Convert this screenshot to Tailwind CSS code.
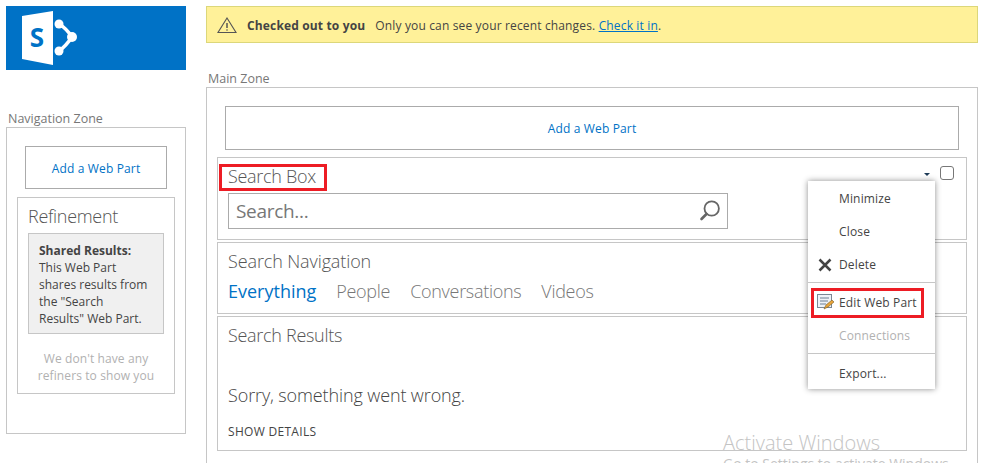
<!DOCTYPE html>
<html lang="en">
<head>
  <meta charset="UTF-8" />
  <title>Search page</title>
  <script src="https://cdn.jsdelivr.net/npm/@tailwindcss/browser@4"></script>
</head>
<body class="bg-white h-[463px] w-[986px] overflow-hidden relative font-['Open_Sans',sans-serif] text-[#444]">
  <div class="flex gap-[20px] pl-[6px] pt-[6px] h-[463px] overflow-hidden">
    <!-- left column -->
    <div class="w-[180px] shrink-0">
      <div class="h-[64px] bg-[#0072c6] relative">
        <svg class="absolute left-[16px] top-[5px]" width="60" height="56" viewBox="0 0 60 56">
          <path d="M0 5 L 31 0 V 54 L 0 48 Z" fill="#fff"/>
          <text x="15" y="36" text-anchor="middle" font-family="Open Sans" font-weight="700" font-size="26" fill="#0072c6">S</text>
          <path d="M37 13 Q 44 17 50 26 Q 44 35 37 40" fill="none" stroke="#fff" stroke-width="3.500"/>
          <circle cx="37" cy="13" r="4.500" fill="#fff"/>
          <circle cx="37" cy="40" r="4.500" fill="#fff"/>
          <circle cx="50" cy="26" r="5" fill="#fff"/>
        </svg>
      </div>
      <div class="mt-[40px] pl-[2px] text-[12.500px] leading-[17px] text-[#777]">Navigation Zone</div>
      <div class="h-[307px] border border-[#c6c6c6] px-[10px] pt-[18px]">
        <div class="mx-[8px] h-[43px] pt-[2px] border border-[#ababab] flex items-center justify-center text-[12px] text-[#0072c6] tracking-[0.15px]">Add a Web Part</div>
        <div class="mt-[8px] h-[197px] border border-[#c6c6c6] px-[10px] pt-[6px]">
          <div class="text-[18px] leading-[24px] font-light text-[#555] tracking-[-0.3px]">Refinement</div>
          <div class="mt-[5px] h-[101px] bg-[#f0f0f0] border border-[#c6c6c6] pl-[10px] pt-[8px] text-[12px] leading-[17px] text-[#444]">
            <div class="font-bold">Shared Results:</div>
            <div>This Web Part<br>shares results from<br>the "Search<br>Results" Web Part.</div>
          </div>
          <div class="mt-[16px] text-center text-[12px] leading-[17px] text-[#b1b1b1] tracking-[0.1px]">We don't have any<br>refiners to show you</div>
        </div>
      </div>
    </div>

    <!-- main column -->
    <div class="w-[772px] shrink-0">
      <div class="h-[37px] bg-[#fff199] border border-[#dcd77a] flex items-center pl-[10px] text-[12px] text-[#444] tracking-[0.15px]">
        <svg width="20" height="18" viewBox="0 0 20 18" fill="none" stroke="#555" stroke-width="1.100">
          <path d="M10 2 L 19 16.500 H 1 Z"/>
          <path d="M10 7 V 12" stroke-width="1.500"/>
          <circle cx="10" cy="14" r="0.800" fill="#555" stroke="none"/>
        </svg>
        <span class="font-bold ml-[10px] pt-[3px]">Checked out to you</span>
        <span class="ml-[10px] pt-[3px]">Only you can see your recent changes. <a class="text-[#0072c6] underline">Check it in</a>.</span>
      </div>
      <div class="mt-[27px] pl-[2px] text-[12.500px] leading-[17px] text-[#777]">Main Zone</div>
      <div class="h-[400px] border border-[#c6c6c6] px-[10px] pt-[18px]">
        <div class="mx-[8px] h-[44px] pt-[1px] border border-[#ababab] flex items-center justify-center text-[12px] text-[#0072c6] tracking-[0.15px]">Add a Web Part</div>

        <div class="mt-[7px] h-[83px] border border-[#c6c6c6] relative">
          <div class="absolute left-[1px] top-[6px] w-[108px] h-[27px] border-[3px] border-[#ed1c24]"></div>
          <div class="pl-[10px] pt-[5px] text-[18px] leading-[26px] font-light text-[#555] tracking-[-0.3px]">Search Box</div>
          <div class="ml-[10px] mt-[4px] w-[500px] h-[36px] border border-[#ababab] flex items-center justify-between pl-[7px] pr-[6px]">
            <span class="text-[19px] text-[#777] tracking-[-0.3px]">Search...</span>
            <svg width="22" height="22" viewBox="0 0 22 22" fill="none" stroke="#666">
              <circle cx="12.700" cy="8.500" r="7.200" stroke-width="1.800"/>
              <path d="M7.500 14 L 2.500 19" stroke-width="2.600" stroke-linecap="round"/>
            </svg>
          </div>
          <div class="absolute left-[706px] top-[15px] w-0 h-0 border-x-[3px] border-x-transparent border-t-[3px] border-t-[#1d3b57]"></div>
          <div class="absolute left-[722px] top-[8px] w-[14px] h-[14px] border border-[#777] rounded-[3px]"></div>
        </div>

        <div class="mt-[2px] h-[72px] border border-[#c6c6c6] pl-[10px] pt-[5px]">
          <div class="text-[18px] leading-[26px] font-light text-[#555] tracking-[-0.12px]">Search Navigation</div>
          <div class="flex gap-[20px] mt-[4px] text-[18px] leading-[26px] font-light text-[#777] tracking-[-0.3px]">
            <span class="text-[#0072c6] font-normal tracking-[0px]">Everything</span>
            <span>People</span>
            <span>Conversations</span>
            <span>Videos</span>
          </div>
        </div>

        <div class="mt-[2px] h-[135px] border border-[#c6c6c6] pl-[10px] pt-[5px]">
          <div class="text-[18px] leading-[26px] font-light text-[#555] tracking-[-0.3px]">Search Results</div>
          <div class="mt-[34px] text-[18px] leading-[26px] font-light text-[#444] tracking-[-0.12px]">Sorry, something went wrong.</div>
          <div class="mt-[16px] text-[12px] leading-[16px] text-[#444] tracking-[0.3px]">SHOW DETAILS</div>
        </div>
      </div>
    </div>
  </div>

  <!-- web part menu -->
  <div class="absolute left-[808px] top-[181px] w-[127px] h-[208px] bg-white shadow-[0_0_6px_rgba(0,0,0,0.45)] text-[12px] text-[#444] tracking-[0.15px]">
    <div class="h-[33px] pl-[31px] pt-[2px] flex items-center">Minimize</div>
    <div class="h-[33px] pl-[31px] pt-[2px] flex items-center">Close</div>
    <div class="h-[35px] pl-[31px] flex items-center relative">
      <svg class="absolute left-[10px] top-[11px]" width="14" height="14" viewBox="0 0 14 14" stroke="#444" stroke-width="2.500"><path d="M1.500 1.500 L 12.500 12.500 M12.500 1.500 L 1.500 12.500"/></svg>
      Delete
    </div>
    <div class="h-[38px] border-t border-[#c6c6c6] relative pl-[31px] pt-[2px] flex items-center">
      <div class="absolute left-[3px] top-[5px] w-[113px] h-[30px] border-[3px] border-[#ed1c24]"></div>
      <svg class="absolute left-[9px] top-[11px]" width="18" height="17" viewBox="0 0 18 17">
        <rect x="0.500" y="0.500" width="14" height="13" fill="#eef2f7" stroke="#7a8794"/>
        <path d="M3 4 H 12 M3 7 H 11 M3 10 H 9" stroke="#6d7f92" stroke-width="1"/>
        <path d="M7 15 L 9 11 L 15 6 L 17 8 L 11 13 Z" fill="#e8a53a" stroke="#7a5a22" stroke-width="0.600"/>
      </svg>
      Edit Web Part
    </div>
    <div class="h-[33px] pl-[31px] pb-[2px] flex items-center text-[#b1b1b1]">Connections</div>
    <div class="h-[36px] border-t border-[#c6c6c6] pl-[31px] pt-[5px] flex items-center">Export...</div>
  </div>

  <!-- activation watermark -->
  <div class="absolute left-[723px] top-[431px] text-[20px] leading-[24px] font-light text-[#c4c4c4]">Activate Windows</div>
  <div class="absolute left-[723px] top-[456px] text-[14px] leading-[16px] text-[#c4c4c4]">Go to Settings to activate Windows.</div>
</body>
</html>
